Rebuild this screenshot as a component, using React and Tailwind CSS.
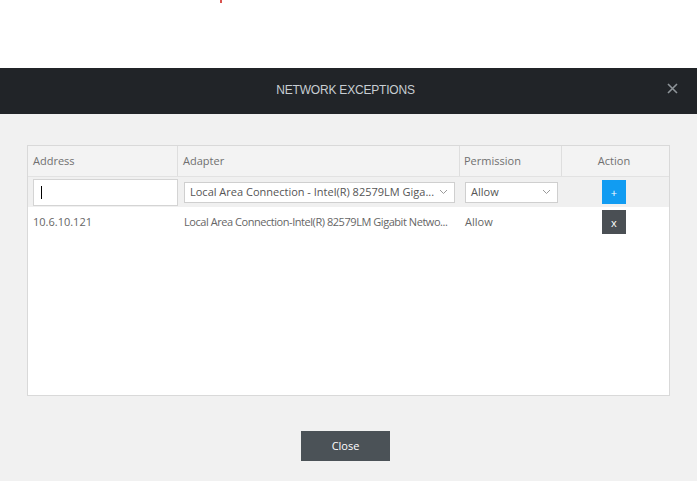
import React from "react";

const Chevron = () => (
  <svg width="9" height="6" viewBox="0 0 9 6" className="shrink-0">
    <path d="M1 1 L4.5 4.5 L8 1" fill="none" stroke="#9a9a9a" strokeWidth="1" />
  </svg>
);

export default function App() {
  const font = { fontFamily: '"Open Sans", "Noto Sans", sans-serif' };
  return (
    <div className="w-[697px] h-[481px] flex flex-col bg-white overflow-hidden" style={font}>
      <div className="h-[68px] bg-white pl-[220px]">
        <div className="w-[2px] h-[3px] bg-[#d9534f]" />
      </div>
      <div className="h-[46px] bg-[#212428] relative flex items-center justify-center pb-[3px] pr-[6px]">
        <span className="text-[12px] text-[#c7ced3] tracking-[-0.2px]" style={{ fontFamily: '"Liberation Sans", Arial, sans-serif' }}>
          NETWORK EXCEPTIONS
        </span>
        <svg className="absolute left-[667px] top-[15px]" width="11" height="11" viewBox="0 0 11 11">
          <path d="M1 1 L10 10 M10 1 L1 10" stroke="#8e9499" strokeWidth="1.6" />
        </svg>
      </div>
      <div className="flex-1 bg-[#f1f1f1] pt-[31px] px-[27px] flex flex-col">
        <div className="h-[251px] border border-[#d9d9d9] bg-white flex flex-col text-[11px]">
          <div className="h-[31px] bg-[#f3f3f3] border-b border-[#e2e2e2] grid grid-cols-[150px_282px_102px_104px] text-[#707070]">
            <div className="flex items-center pl-[5px] border-r border-[#dedede]">Address</div>
            <div className="flex items-center pl-[5px] border-r border-[#dedede]">Adapter</div>
            <div className="flex items-center pl-[4px] border-r border-[#dedede]">Permission</div>
            <div className="flex items-center justify-center">Action</div>
          </div>
          <div className="h-[30px] bg-[#f0f0f0] grid grid-cols-[150px_282px_102px_104px] items-center">
            <div className="pl-[5px]">
              <div className="h-[27px] w-[145px] bg-white border border-[#d4d4d4] flex items-center pl-[7px]">
                <div className="w-[1px] h-[13px] bg-black" />
              </div>
            </div>
            <div className="pl-[6px]">
              <div className="h-[21px] w-[271px] bg-white border border-[#cfcfcf] flex items-center justify-between pl-[5px] pr-[6px] text-[#555]">
                <span className="truncate">Local Area Connection - Intel(R) 82579LM Giga...</span>
                <Chevron />
              </div>
            </div>
            <div className="pl-[5px]">
              <div className="h-[21px] w-[93px] bg-white border border-[#cfcfcf] flex items-center justify-between pl-[5px] pr-[6px] text-[#555]">
                <span>Allow</span>
                <Chevron />
              </div>
            </div>
            <div className="flex justify-center">
              <div className="w-[24px] h-[24px] bg-[#119cf2] text-white flex items-center justify-center text-[11px] leading-none">+</div>
            </div>
          </div>
          <div className="h-[30px] bg-white grid grid-cols-[150px_282px_102px_104px] items-center text-[#666]">
            <div className="pl-[5px]">10.6.10.121</div>
            <div className="pl-[6px] whitespace-nowrap overflow-hidden tracking-[-0.45px]">Local Area Connection-Intel(R) 82579LM Gigabit Netwo...</div>
            <div className="pl-[5px]">Allow</div>
            <div className="flex justify-center">
              <div className="w-[24px] h-[24px] bg-[#4a4f54] text-white flex items-center justify-center text-[11px] leading-none">x</div>
            </div>
          </div>
        </div>
        <div className="pt-[35px] pl-[274px]">
          <div className="w-[89px] h-[30px] bg-[#4b5257] text-white text-[11px] flex items-center justify-center">Close</div>
        </div>
      </div>
    </div>
  );
}
